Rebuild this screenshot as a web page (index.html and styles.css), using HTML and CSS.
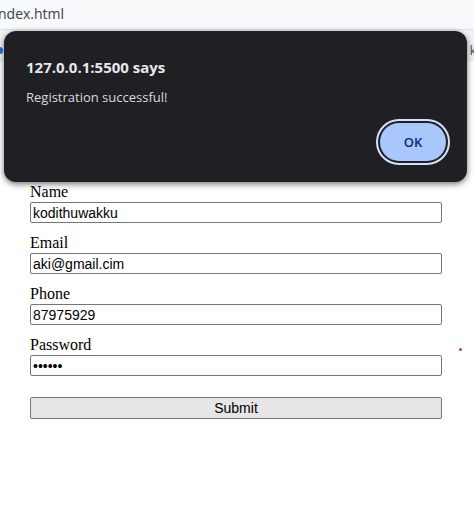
FILE: index.html
```html
<!DOCTYPE html>
<html lang="en">
<head>
<meta charset="utf-8">
<title>Registration</title>
<link rel="stylesheet" href="styles.css">
</head>
<body>
  <header class="chrome">
    <div class="addr"><span class="url">ndex.html</span></div>
    <div class="bookmarks">
      <span class="favdot"></span>
      <span class="bm-k">k</span>
    </div>
  </header>

  <main class="page">
    <form class="reg-form">
      <div class="group">
        <label class="lbl" for="name">Name</label>
        <input class="field" id="name" type="text" value="kodithuwakku">
      </div>
      <div class="group">
        <label class="lbl" for="email">Email</label>
        <input class="field" id="email" type="text" value="aki@gmail.cim">
      </div>
      <div class="group">
        <label class="lbl" for="phone">Phone</label>
        <input class="field" id="phone" type="text" value="87975929">
      </div>
      <div class="group">
        <label class="lbl" for="password">Password</label>
        <input class="field" id="password" type="password" value="secret">
      </div>
      <button class="submit" type="button">Submit</button>
    </form>
    <span class="red-dot"></span>
  </main>

  <div class="dialog" role="alertdialog">
    <div class="dlg-title">127.0.0.1:5500 says</div>
    <div class="dlg-msg">Registration successful!</div>
    <div class="dlg-actions">
      <button class="ok" type="button">OK</button>
    </div>
  </div>
</body>
</html>
```

FILE: styles.css
```css
html, body {
  margin: 0;
  padding: 0;
  background: #ffffff;
}

body {
  font-family: "Liberation Serif", "Times New Roman", serif;
  width: 474px;
  height: 527px;
  overflow: hidden;
  position: relative;
}

/* Browser chrome strip */
.chrome {
  display: flex;
  flex-direction: column;
}

.addr {
  height: 29px;
  background: #f8f9fb;
  display: flex;
  align-items: center;
  border-bottom: 1px solid #dfe1e5;
}

.url {
  font-family: "Open Sans", "Noto Sans", sans-serif;
  font-size: 14px;
  color: #3c4043;
  margin-left: -2px;
  margin-top: -3px;
}

.bookmarks {
  height: 32px;
  background: #eff1f4;
  display: flex;
  align-items: center;
  justify-content: space-between;
  padding-top: 8px;
  box-sizing: border-box;
}

.favdot {
  width: 7px;
  height: 7px;
  border-radius: 50%;
  background: #1a73e8;
  margin-left: -4px;
}

.bm-k {
  font-family: "Open Sans", "Noto Sans", sans-serif;
  font-size: 12px;
  color: #444;
  margin-right: -2px;
}

/* Page */
.page {
  position: relative;
  padding: 121px 32px 0 30px;
}

.reg-form {
  display: flex;
  flex-direction: column;
}

.group {
  display: flex;
  flex-direction: column;
  margin-bottom: 11px;
}

.lbl {
  font-size: 16px;
  line-height: 18px;
  color: #000;
}

.field {
  margin: 1px 0 0 0;
  height: 21px;
  box-sizing: border-box;
  border: 1px solid #767676;
  border-radius: 2px;
  padding: 1px 2px;
  font-family: "Liberation Sans", Arial, sans-serif;
  font-size: 14px;
  color: #000;
  background: #fff;
  width: 100%;
}

.submit {
  margin-top: 10px;
  height: 22px;
  width: 100%;
  box-sizing: border-box;
  border: 1px solid #767676;
  border-radius: 2px;
  background: #e6e6e6;
  font-family: "Liberation Sans", Arial, sans-serif;
  font-size: 14px;
  color: #000;
  padding: 0;
}

.red-dot {
  position: absolute;
  left: 459px;
  top: 286px;
  width: 3px;
  height: 3px;
  border-radius: 50%;
  background: #c8384f;
}

/* Alert dialog overlay */
.dialog {
  position: absolute;
  left: 4px;
  top: 31px;
  width: 463px;
  height: 151px;
  box-sizing: border-box;
  background: #1f1f24;
  border-radius: 12px;
  box-shadow: 0 2px 6px rgba(0, 0, 0, 0.55);
  padding: 26px 21px 21px 22px;
  display: flex;
  flex-direction: column;
  font-family: "Open Sans", "Noto Sans", sans-serif;
}

.dlg-title {
  font-size: 15px;
  line-height: 20px;
  font-weight: 700;
  color: #e8e8ea;
}

.dlg-msg {
  margin-top: 10px;
  font-size: 13px;
  line-height: 20px;
  color: #dadbdf;
}

.dlg-actions {
  margin-top: 16px;
  display: flex;
  justify-content: flex-end;
}

.ok {
  width: 66px;
  height: 38px;
  border: none;
  border-radius: 19px;
  background: #a8c7fa;
  color: #062e6f;
  font-family: "Open Sans", "Noto Sans", sans-serif;
  font-size: 13px;
  font-weight: 600;
  outline: 2px solid #d3e3fd;
  outline-offset: 2px;
  padding: 0;
}
```
